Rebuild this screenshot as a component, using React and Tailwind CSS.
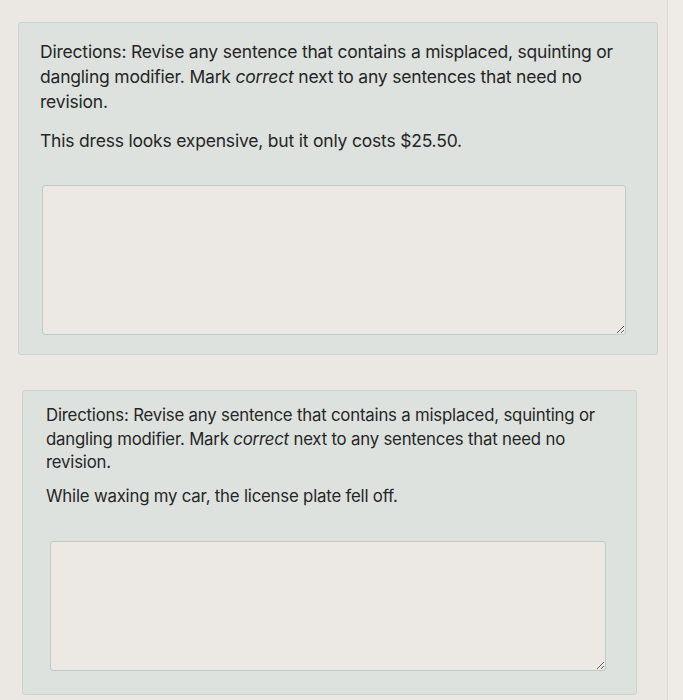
import React from 'react';

// Two revision questions, each with its prompt and an answer box
const DIRECTIONS = (
  <>
    Directions: Revise any sentence that contains a misplaced, squinting or
    <br />
    dangling modifier. Mark <em>correct</em> next to any sentences that need no
    <br />
    revision.
  </>
);

const QuestionCard = ({ sentence, card, text, gap, box }) => (
  <div className={`rounded-[3px] border border-[#cdd3cf] bg-[#dde2de] ${card}`}>
    <p className={`whitespace-nowrap ${text}`}>{DIRECTIONS}</p>
    <p className={`whitespace-nowrap ${text} ${gap}`}>{sentence}</p>
    <textarea
      className={`block rounded-[3px] border border-[#c3c9c5] bg-[#ece9e4] outline-none ${box}`}
      aria-label="Answer"
    />
  </div>
);

const App = () => {
  return (
    <div className="relative min-h-[700px] w-[683px] overflow-hidden bg-[#ebe8e3] font-['Inter','Liberation_Sans',Arial,sans-serif] text-[#262626]">
      {/* faint panel edge on the right */}
      <div className="absolute right-0 top-0 h-full w-[16px] border-l border-[#dcd9d4] bg-[#efece8]" />

      <div className="relative pl-[18px] pt-[22px]">
        <QuestionCard
          sentence="This dress looks expensive, but it only costs $25.50."
          card="w-[640px] h-[333px] pl-[21px] pt-[16px]"
          text="text-[17.5px] leading-[25px] tracking-[-0.2px]"
          gap="mt-[14px]"
          box="mt-[32px] h-[150px] w-[584px] ml-[2px]"
        />
      </div>

      <div className="relative pl-[22px] pt-[35px]">
        <QuestionCard
          sentence="While waxing my car, the license plate fell off."
          card="w-[615px] h-[305px] pl-[23px] pt-[13px]"
          text="text-[16.8px] leading-[23.5px] tracking-[-0.2px]"
          gap="mt-[10px]"
          box="mt-[33px] h-[130px] w-[556px] ml-[4px]"
        />
      </div>
    </div>
  );
};

export default App;
